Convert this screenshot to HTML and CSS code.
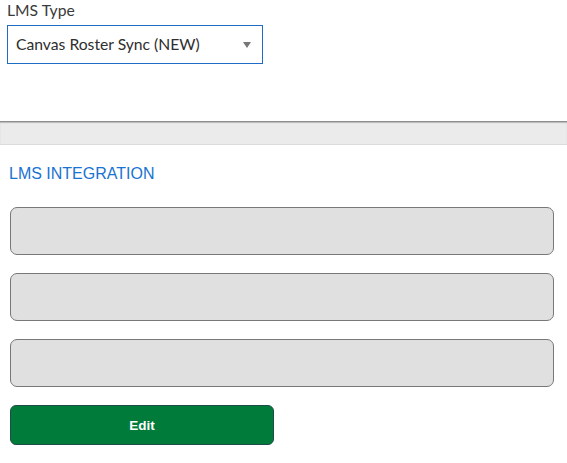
FILE: index.html
```html
<!DOCTYPE html>
<html lang="en">
<head>
<meta charset="utf-8">
<title>LMS Integration</title>
<link rel="stylesheet" href="styles.css">
</head>
<body>
<div class="top">
  <div class="label">LMS Type</div>
  <div class="select">
    <span class="select-value">Canvas Roster Sync (NEW)</span>
    <span class="caret"></span>
  </div>
</div>
<div class="band"></div>
<div class="section">
  <h2 class="title">LMS INTEGRATION</h2>
  <div class="fields">
    <div class="field"></div>
    <div class="field"></div>
    <div class="field"></div>
    <button class="edit-btn" type="button">Edit</button>
  </div>
</div>
</body>
</html>
```
FILE: styles.css
```css
html, body {
  margin: 0;
  padding: 0;
  background: #ffffff;
}
body {
  width: 567px;
  height: 463px;
  overflow: hidden;
  font-family: "Lato", "Liberation Sans", sans-serif;
}
.top {
  padding: 0 0 0 7px;
  height: 121px;
  box-sizing: border-box;
}
.label {
  font-size: 15.7px;
  line-height: 20px;
  color: #3a3a3a;
  margin-bottom: 5px;
}
.select {
  width: 256px;
  height: 39px;
  box-sizing: border-box;
  border: 1px solid #1f6cc4;
  display: flex;
  align-items: center;
  justify-content: space-between;
  padding: 0 11px 1px 8px;
}
.select-value {
  font-size: 15.7px;
  color: #2e2e2e;
}
.caret {
  width: 0;
  height: 0;
  border-left: 4px solid transparent;
  border-right: 4px solid transparent;
  border-top: 6px solid #777777;
  margin-top: 1px;
}
.band {
  height: 24px;
  box-sizing: border-box;
  background: #ebebeb;
  border-top: 1px solid #8e8e8e;
  border-bottom: 1px solid #dcdcdc;
  box-shadow: inset 0 1px 1px #b8b8b8;
}
.section {
  padding: 20px 13px 0 10px;
}
.title {
  margin: 0 0 24px -1px;
  font-family: "Liberation Sans", Arial, sans-serif;
  font-weight: normal;
  font-size: 16px;
  line-height: 18px;
  color: #1a72d1;
}
.fields {
  display: flex;
  flex-direction: column;
  gap: 18px;
  align-items: flex-start;
}
.field {
  width: 100%;
  height: 48px;
  box-sizing: border-box;
  background: #e0e0e0;
  border: 1px solid #787878;
  border-radius: 7px;
}
.edit-btn {
  width: 264px;
  height: 40px;
  box-sizing: border-box;
  background: #007b3a;
  border: 1px solid #1d4d47;
  border-radius: 6px;
  color: #ffffff;
  font-family: "Liberation Sans", Arial, sans-serif;
  font-weight: bold;
  font-size: 13.5px;
  padding: 0;
  margin: 0;
}
```
